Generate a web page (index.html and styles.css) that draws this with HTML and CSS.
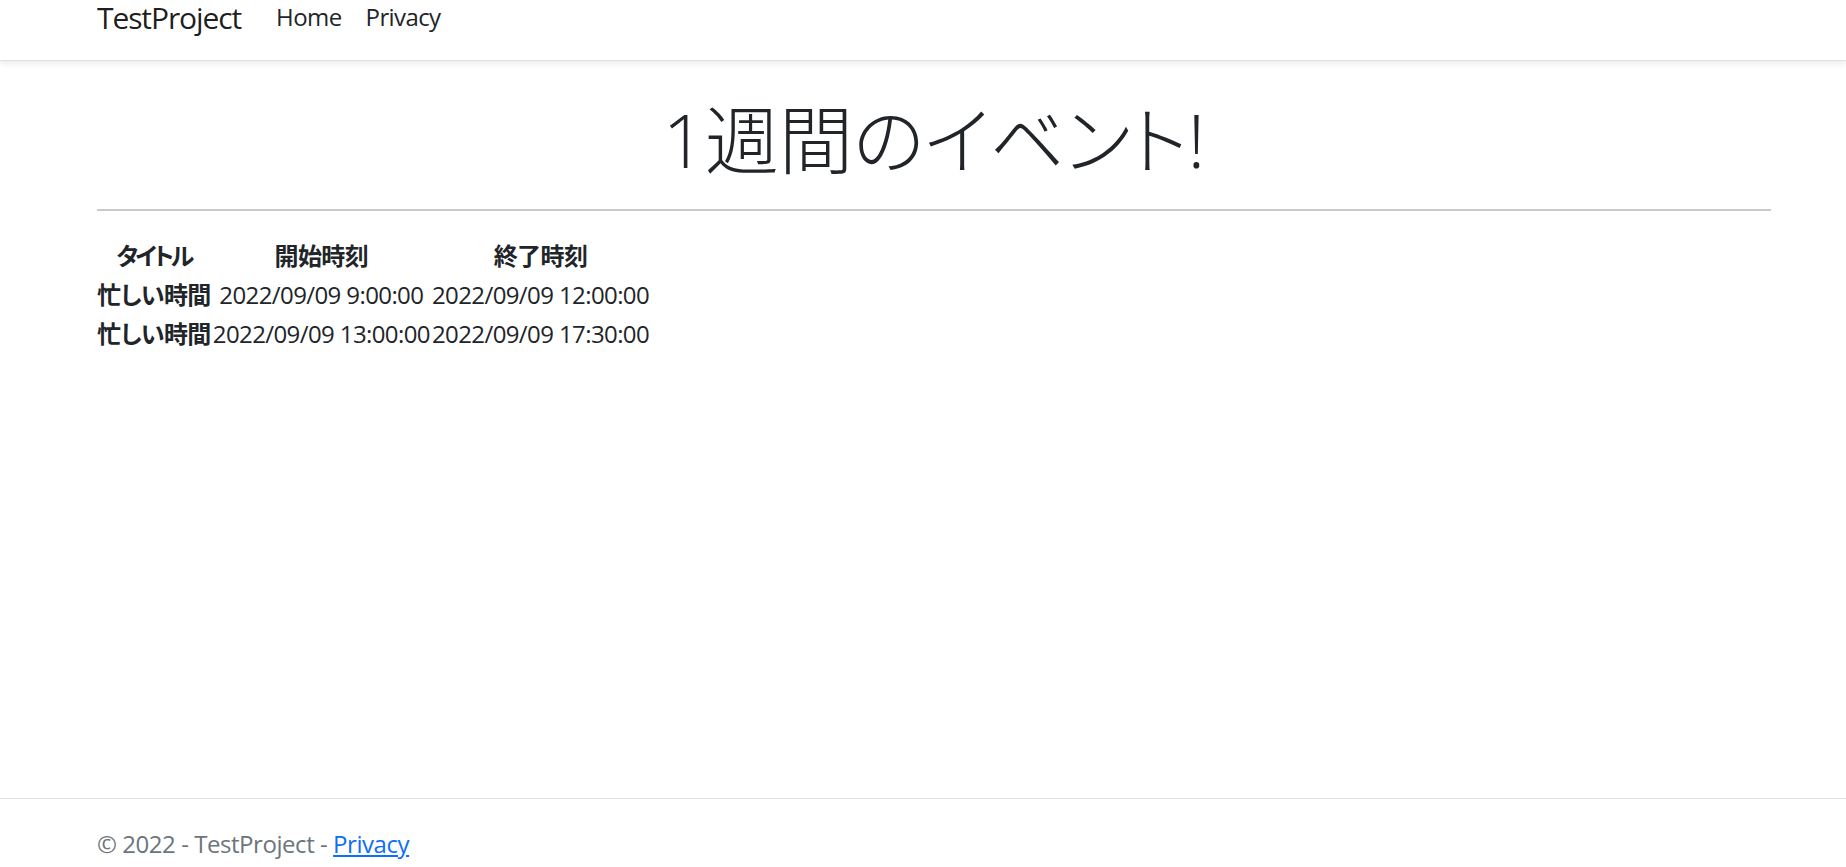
FILE: index.html
```html
<!DOCTYPE html>
<html lang="ja">
<head>
<meta charset="utf-8">
<title>TestProject</title>
<link rel="stylesheet" href="styles.css">
</head>
<body>
<div class="page">
  <header class="site-header">
    <nav class="container navbar">
      <a class="brand" href="#">TestProject</a>
      <ul class="nav">
        <li><a class="nav-link" href="#">Home</a></li>
        <li><a class="nav-link" href="#">Privacy</a></li>
      </ul>
    </nav>
  </header>
  <main class="container main">
    <h1 class="display">1週間のイベント!</h1>
    <hr class="rule">
    <table class="events">
      <thead>
        <tr><th class="kana-head">タイトル</th><th>開始時刻</th><th>終了時刻</th></tr>
      </thead>
      <tbody>
        <tr><th>忙しい時間</th><td>2022/09/09 9:00:00</td><td>2022/09/09 12:00:00</td></tr>
        <tr><th>忙しい時間</th><td>2022/09/09 13:00:00</td><td>2022/09/09 17:30:00</td></tr>
      </tbody>
    </table>
  </main>
  <footer class="site-footer">
    <div class="container footer-inner">&copy; 2022 - TestProject - <a class="footer-link" href="#">Privacy</a></div>
  </footer>
</div>
</body>
</html>
```
FILE: styles.css
```css
html, body {
  margin: 0;
  padding: 0;
  background: #fff;
}
body {
  font-family: "Open Sans", "Noto Sans CJK JP", sans-serif;
  font-size: 24px;
  line-height: 1.5;
  color: #212529;
  font-feature-settings: "palt";
  letter-spacing: -0.6px;
}
.page {
  height: 867px;
  display: flex;
  flex-direction: column;
  overflow: hidden;
}
.container {
  width: 1674px;
  margin-left: 97px;
  box-sizing: border-box;
}
.site-header {
  height: 60px;
  border-bottom: 1px solid #dee2e6;
  box-shadow: 0 3px 6px rgba(0, 0, 0, 0.075);
  flex: 0 0 auto;
  position: relative;
  z-index: 1;
  background: #fff;
}
.navbar {
  display: flex;
  align-items: flex-start;
  height: 60px;
}
.brand {
  font-size: 30px;
  line-height: 30px;
  padding-top: 3px;
  margin-right: 23px;
  letter-spacing: -1.1px;
  color: rgba(0, 0, 0, 0.9);
  text-decoration: none;
  white-space: nowrap;
}
.nav {
  display: flex;
  list-style: none;
  margin: 0;
  padding: 0;
}
.nav-link {
  display: block;
  font-size: 24px;
  line-height: 24px;
  padding: 5px 12px 0;
  color: #212529;
  text-decoration: none;
}
.main {
  flex: 1 1 auto;
}
.display {
  margin: 29px 0 0;
  font-size: 74px;
  font-weight: 300;
  line-height: 100px;
  letter-spacing: 0;
  text-align: center;
  color: #212529;
}
.rule {
  margin: 19px 0 0;
  border: 0;
  border-top: 2px solid #c8c9ca;
  height: 0;
}
.events {
  margin-top: 25px;
  border-collapse: collapse;
  text-align: center;
}
.events th,
.events td {
  padding: 1px 1px;
  line-height: 37px;
  white-space: nowrap;
}
.events tr > :first-child {
  padding-left: 0;
}
.events th {
  font-weight: 700;
}
.events td {
  font-weight: 400;
}
.events .kana-head {
  letter-spacing: -3px;
}
.site-footer {
  flex: 0 0 auto;
  height: 68px;
  border-top: 1px solid #dee2e6;
  color: #6c757d;
  overflow: hidden;
}
.footer-inner {
  line-height: 90px;
  letter-spacing: -0.45px;
  white-space: nowrap;
}
.footer-link {
  color: #0d6efd;
  text-decoration: underline;
}
```
